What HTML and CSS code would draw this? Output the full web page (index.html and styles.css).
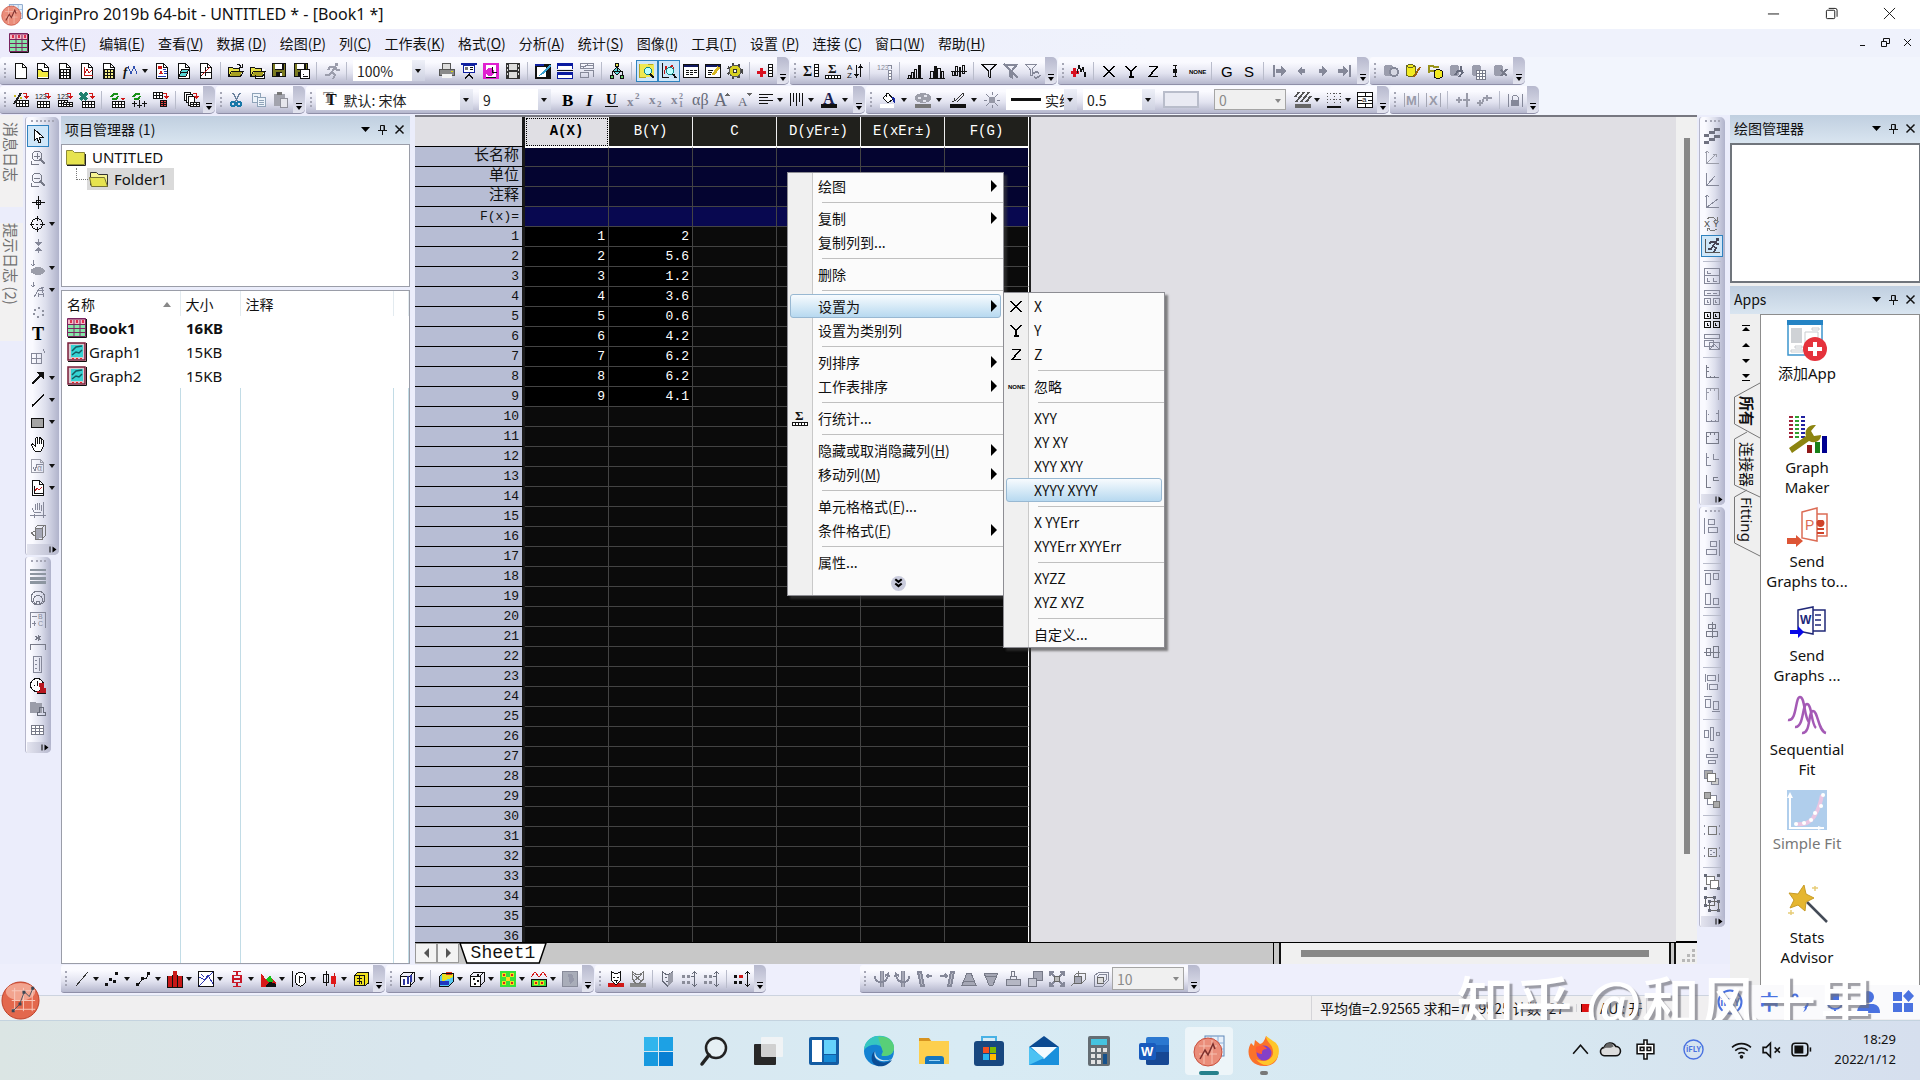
FILE: index.html
```
<!DOCTYPE html>
<html lang="zh-CN">
<head>
  <meta charset="UTF-8"/>
  <meta name="viewport" content="width=device-width, initial-scale=1.0"/>
  <title>OriginPro 2019b 64-bit - UNTITLED * - [Book1 *]</title>
  <link rel="stylesheet" href="styles.css">
</head>
<body>
  <header class="titlebar">
    <span class="app-icon" data-big="origin"></span>
    <h1>OriginPro 2019b 64-bit - UNTITLED * - [Book1 *]</h1>
    <div class="win-controls">
      <button aria-label="Minimize"><svg viewBox="0 0 14 14"><path d="M1 7.500h12"/></svg></button>
      <button aria-label="Restore"><svg viewBox="0 0 14 14"><rect x="1.500" y="3.500" width="9" height="9" rx="1"/><path d="M4 1.500h7a2 2 0 0 1 2 2v7"/></svg></button>
      <button aria-label="Close"><svg viewBox="0 0 14 14"><path d="M1 1l12 12M13 1L1 13"/></svg></button>
    </div>
  </header>

  <nav class="menubar">
    <span class="book-icon" data-big="book"></span>
    <a href="#">文件(<u>F</u>)</a>
    <a href="#">编辑(<u>E</u>)</a>
    <a href="#">查看(<u>V</u>)</a>
    <a href="#">数据 (<u>D</u>)</a>
    <a href="#">绘图(<u>P</u>)</a>
    <a href="#">列(<u>C</u>)</a>
    <a href="#">工作表(<u>K</u>)</a>
    <a href="#">格式(<u>O</u>)</a>
    <a href="#">分析(<u>A</u>)</a>
    <a href="#">统计(<u>S</u>)</a>
    <a href="#">图像(<u>I</u>)</a>
    <a href="#">工具(<u>T</u>)</a>
    <a href="#">设置 (<u>P</u>)</a>
    <a href="#">连接 (<u>C</u>)</a>
    <a href="#">窗口(<u>W</u>)</a>
    <a href="#">帮助(<u>H</u>)</a>
    <div class="mdi-controls">
      <button aria-label="Minimize book"><svg viewBox="0 0 9 9"><path d="M1 7.500h5"/></svg></button>
      <button aria-label="Restore book"><svg viewBox="0 0 9 9"><path d="M.5 3.500h5v5h-5zM2.500 3V.5h6v5H6"/></svg></button>
      <button aria-label="Close book"><svg viewBox="0 0 9 9"><path d="M1 1l7 7M8 1L1 8"/></svg></button>
    </div>
  </nav>

  <div class="toolbar-row">
    <div class="toolbar">
      <div class="tools" data-tools="new folder book graph matrix fx+ layout notes2 func | open openx save savex | run |"></div>
      <label class="combo zoom"><select aria-label="Zoom"><option>100%</option></select></label>
      <div class="tools" data-tools="print slide video film | brush rows split | tree | *explorer *plotview results script gear | addcol"></div>
    </div>
    <div class="toolbar">
      <div class="tools" data-tools="colstat rowstat sort | numcol | bars1 bars2 bars3 | filter nofilter refilter"></div>
    </div>
    <div class="toolbar">
      <div class="tools" data-tools="addplot | X Y Z err none | G S | first prev next last"></div>
    </div>
    <div class="toolbar">
      <div class="tools" data-tools="dbgear dbedit dbopen dbview dbgrid dbcut"></div>
    </div>
  </div>

  <div class="toolbar-row">
    <div class="toolbar">
      <div class="tools" data-tools="wizard imp1 imp2 excel | reimp1 reimp2 table | stack"></div>
    </div>
    <div class="toolbar">
      <div class="tools" data-tools="cut copy paste"></div>
    </div>
    <div class="toolbar">
      <label class="combo font"><b class="tt">T</b><select aria-label="Font"><option>默认: 宋体</option></select></label>
      <label class="combo size"><select aria-label="Font size"><option>9</option></select></label>
      <div class="tools" data-tools="bold italic under sup sub supsub greek bigA smallA align+ vlines+ fontcolor^"></div>
    </div>
    <div class="toolbar">
      <div class="tools" data-tools="fill^ palette^ linecolor^ sun"></div>
      <label class="combo line"><i></i><select aria-label="Line style"><option>实线</option></select></label>
      <label class="combo size"><select aria-label="Line width"><option>0.5</option></select></label>
      <button class="swatch" aria-label="Line pattern"></button>
      <label class="combo size off"><select aria-label="Pattern width" disabled><option>0</option></select></label>
      <div class="tools" data-tools="hatch+ border+ merge"></div>
    </div>
    <div class="toolbar">
      <div class="tools" data-tools="maskM maskX | plusv plush | lock"></div>
    </div>
  </div>

  <main class="main">
    <div class="center">
      <div class="work">
        <div class="side-tabs">
          <button>消息日志</button>
          <button>提示日志 (2)</button>
        </div>
        <div class="side-tools left">
          <div class="toolbar vertical wide"><div class="tools" data-tools="*pointer zoomin zoomout cross target+ squeeze blob+ figure+ dots textT anno arrow+ lineT+ rect+ hand root+ inset+ handaxis cube"></div></div>
          <div class="toolbar vertical"><div class="tools" data-tools="stripes rings legend asterisk ruler clock stamp grid3"></div></div>
        </div>

        <section class="project">
          <div class="panel-title"><h2>项目管理器 (1)</h2><div class="panel-btns"></div></div>
          <div class="tree">
            <a href="#"><svg class="fold" viewBox="0 0 20 17"><path d="M.5 15.500v-14h6l2 2h10v12z" fill="#e6e34f" stroke="#8c8a38"/><path d="M1 16.500h18.500V5" fill="none" stroke="#222"/></svg>UNTITLED</a>
            <a href="#" class="child"><svg class="fold" viewBox="0 0 20 17"><path d="M1.500 14V1.500h6l2 2h9v12z" fill="#f6f392" stroke="#333"/><path d="M2.500 15.500L.5 6.500h15l3 9z" fill="#e6e34f" stroke="#777432"/></svg>Folder1</a>
          </div>
          <div class="files">
            <table>
              <thead><tr><th>名称 <i class="up"></i></th><th>大小</th><th>注释</th><th></th></tr></thead>
              <tbody>
                <tr class="current"><td><span data-big="book"></span>Book1</td><td>16KB</td><td></td><td></td></tr>
                <tr><td><span data-big="graphfile"></span>Graph1</td><td>15KB</td><td></td><td></td></tr>
                <tr><td><span data-big="graphfile"></span>Graph2</td><td>15KB</td><td></td><td></td></tr>
                <tr class="rest"><td></td><td></td><td></td><td></td></tr>
              </tbody>
            </table>
          </div>
        </section>

        <section class="book">
          <div class="canvas">
            <div class="sheet-wrap">
              <table class="sheet">
                <thead><tr><th></th><th class="active">A(X)</th><th>B(Y)</th><th>C</th><th>D(yEr±)</th><th>E(xEr±)</th><th>F(G)</th></tr></thead>
                <tbody id="sheetBody"></tbody>
              </table>
            </div>
            <div class="vscroll"><i></i></div>
          </div>
          <div class="sheet-tabs">
            <button class="nav-btn" aria-label="Previous sheet"><i class="tri left"></i></button>
            <button class="nav-btn" aria-label="Next sheet"><i class="tri right"></i></button>
            <button class="sheet-tab"><svg viewBox="0 0 90 20" preserveAspectRatio="none"><path d="M1 0l7 20h74l7-20z" fill="#fff" stroke="#000" stroke-width="1.500"/></svg><span>Sheet1</span></button>
            <div class="tab-fill"></div>
            <div class="hscroll"><i></i></div>
            <div class="corner"><svg viewBox="0 0 14 14"><path d="M10 0h3v3h-3zM10 5h3v3h-3zM5 5h3v3H5zM10 10h3v3h-3zM5 10h3v3H5zM0 10h3v3H0z" fill="#b8b8b8"/></svg></div>
          </div>

          <div class="menu" id="columnMenu">
            <button class="sub">绘图</button>
            <hr>
            <button class="sub">复制</button>
            <button>复制列到...</button>
            <hr>
            <button>删除</button>
            <hr>
            <button class="sub hot">设置为</button>
            <button>设置为类别列</button>
            <hr>
            <button class="sub">列排序</button>
            <button class="sub">工作表排序</button>
            <hr>
            <button><span class="mi" data-icon="rowstat"></span>行统计...</button>
            <hr>
            <button class="sub">隐藏或取消隐藏列(<u>H</u>)</button>
            <button class="sub">移动列(<u>M</u>)</button>
            <hr>
            <button>单元格格式(<u>F</u>)...</button>
            <button class="sub">条件格式(<u>F</u>)</button>
            <hr>
            <button>属性...</button>
            <div class="expand"><svg viewBox="0 0 14 14"><path d="M4 3l3 2.500L10 3M4 7l3 2.500L10 7" fill="none" stroke="#000" stroke-width="2"/></svg></div>
          </div>
          <div class="menu submenu" id="setAsMenu">
            <button><span class="mi" data-icon="X"></span>X</button>
            <button><span class="mi" data-icon="Y"></span>Y</button>
            <button><span class="mi" data-icon="Z"></span>Z</button>
            <hr>
            <button><span class="mi" data-icon="none"></span>忽略</button>
            <hr>
            <button>XYY</button>
            <button>XY XY</button>
            <button>XYY XYY</button>
            <button class="hot">XYYY XYYY</button>
            <hr>
            <button>X YYErr</button>
            <button>XYYErr XYYErr</button>
            <hr>
            <button>XYZZ</button>
            <button>XYZ XYZ</button>
            <hr>
            <button>自定义...</button>
          </div>
        </section>

        <div class="side-tools right">
          <div class="toolbar vertical"><div class="tools" data-tools="steps axis1 axis2 axis3 swapxy *speed | lay1 lay2 lay3 lay4 | ax1 ax2 ax3 ax4 ax5 ax6"></div></div>
          <div class="toolbar vertical"><div class="tools" data-tools="alignl alignr | alignt alignb | midv midh | samew sameh | dist1 dist2 front back | fit1 fit2 | group ungroup"></div></div>
        </div>
      </div>

      <div class="toolbar-row bottom">
        <div class="toolbar">
          <div class="tools" data-tools="pline+ pscatter+ plinesym+ pcolumn+ ptemplate+ pbox+ parea+ ppolar+ pstock+ pzoom"></div>
        </div>
        <div class="toolbar">
          <div class="tools" data-tools="bar3d+ | surface+ scatter3d+ contour+ profile+ image"></div>
        </div>
        <div class="toolbar">
          <div class="tools" data-tools="maskr maskg | maskd grp1 grp1 | grp2"></div>
        </div>
        <div class="toolbar three-d">
          <div class="tools" data-tools="rotl rotr tiltl tiltr trap trapd lamp cubes expand cube2 cube3"></div>
          <label class="combo size off"><select aria-label="Rotation angle" disabled><option>10</option></select></label>
        </div>
      </div>
    </div>

    <aside class="right-panel">
      <section>
        <div class="panel-title"><h2>绘图管理器</h2><div class="panel-btns"></div></div>
        <div class="plot-box"></div>
      </section>
      <section class="apps">
        <div class="panel-title"><h2>Apps</h2><div class="panel-btns"></div></div>
        <div class="apps-body">
          <div class="app-tabs">
            <svg class="outline" viewBox="0 0 30 250"><path d="M30 69L4.500 83v27L30 124M17 118L4.500 125v46L30 183M17 176L4.500 183v46L30 242" fill="none" stroke="#777"/></svg>
            <div class="spin">
              <button aria-label="Top"><svg viewBox="0 0 8 8"><path d="M0 0h8v1H0zM4 2l4 4H0z"/></svg></button>
              <button aria-label="Up"><svg viewBox="0 0 8 8"><path d="M4 2l4 4H0z"/></svg></button>
              <button aria-label="Down"><svg viewBox="0 0 8 8"><path d="M4 6l4-4H0z"/></svg></button>
              <button aria-label="Bottom"><svg viewBox="0 0 8 8"><path d="M0 7h8v1H0zM4 5l4-4H0z"/></svg></button>
            </div>
            <button class="vt on">所有</button>
            <button class="vt">连接器</button>
            <button class="vt">Fitting</button>
          </div>
          <div class="app-list">
            <a href="#"><span data-big="addapp"></span>添加App</a>
            <a href="#"><span data-big="maker"></span>Graph Maker</a>
            <a href="#"><span data-big="ppt"></span>Send Graphs to...</a>
            <a href="#"><span data-big="wordsend"></span>Send Graphs&nbsp;...</a>
            <a href="#"><span data-big="seqfit"></span>Sequential Fit</a>
            <a href="#" class="dim"><span data-big="simplefit"></span>Simple Fit</a>
            <a href="#"><span data-big="wand"></span>Stats Advisor</a>
          </div>
        </div>
      </section>
    </aside>
  </main>

  <footer class="status">
    <span class="stats">平均值=2.92565 求和=70.9925 计数=27</span>
    <span class="flag"><i></i></span>
    <span class="auto">AU : 开</span>
  </footer>

  <div class="float-logo" data-big="origin-round"></div>
  <div class="ime">
    <svg viewBox="0 0 26 26"><circle cx="13" cy="13" r="11.500"/><text x="13" y="17" text-anchor="middle" font-size="10" font-weight="700">iFLY</text></svg>
    <b>中</b>
    <svg viewBox="0 0 26 26"><circle cx="8" cy="8" r="2.500"/><path class="solid" d="M17 12a3.500 3.500 0 1 1-1 6 1 1 0 0 0 1-6zm3 3c1 4-1 7-4 8 2-2 2-4 2-6z"/></svg>
    <svg viewBox="0 0 26 26"><rect class="solid" x="9" y="2" width="8" height="14" rx="4"/><path d="M5 12a8 8 0 0 0 16 0M13 20v4"/></svg>
    <svg viewBox="0 0 26 26"><circle class="solid" cx="12" cy="8" r="6"/><path class="solid" d="M1 24c0-8 5-9 9-9h6c4 0 8 2 8 9z"/></svg>
    <svg viewBox="0 0 26 26"><path class="solid" d="M3 3h9v9H3zM3 14h9v9H3zM14 14h9v9h-9zM18.500 1l5.500 6-5.500 6L13 7z"/></svg>
  </div>
  <div class="watermark">知乎 @和风十里</div>

  <footer class="taskbar">
    <div class="dock">
      <button aria-label="Start" data-big="windows"></button>
      <button aria-label="Search" data-big="search"></button>
      <button aria-label="Task view" data-big="taskview"></button>
      <button aria-label="Widgets" data-big="widgets"></button>
      <button aria-label="Edge" data-big="edge"></button>
      <button aria-label="Explorer" data-big="files"></button>
      <button aria-label="Store" data-big="store"></button>
      <button aria-label="Mail" data-big="mail"></button>
      <button aria-label="Calculator" data-big="calc"></button>
      <button aria-label="Word" data-big="word"></button>
      <button aria-label="Origin" data-big="origin" class="running"></button>
      <button aria-label="Firefox" data-big="firefox" class="open"></button>
    </div>
    <div class="tray">
      <svg viewBox="0 0 20 20"><path d="M3 14l7-8 7 8"/></svg>
      <svg viewBox="0 0 20 20"><path d="M5 16a4 4 0 0 1-1-8 6 6 0 0 1 11-1 4.500 4.500 0 0 1 0 9z" fill="#ddd"/><path d="M3 9c4-2 6 1 10-2l-2-3-4 0z" fill="#666" stroke="none"/></svg>
      <svg class="lang" viewBox="0 0 20 20"><path d="M8.500 1h3v4H18v9h-6.500v5h-3v-5H2V5h6.500z" fill="#fff"/><path d="M5 8h3.500v3H5zM11.500 8H15v3h-3.500z"/></svg>
      <svg class="ifly" viewBox="0 0 22 22"><circle cx="11" cy="11" r="10"/><text x="11" y="14" text-anchor="middle" font-size="8" font-weight="700">iFLY</text></svg>
      <svg class="wifi" viewBox="0 0 20 20"><path d="M1 8a13 13 0 0 1 18 0M4 11a9 9 0 0 1 12 0M7 14a5 5 0 0 1 6 0"/><circle cx="10" cy="17" r="1"/></svg>
      <svg viewBox="0 0 20 20"><path d="M2 8h3l4-4v13l-4-4H2zM13 8l5 5M18 8l-5 5"/></svg>
      <svg viewBox="0 0 20 20"><rect x="1" y="4" width="15" height="12" rx="3"/><path d="M4 7h7v6H4z" fill="#111"/><path d="M18.500 8v4"/></svg>
      <div class="clock">18:29<br>2022/1/12</div>
    </div>
  </footer>

  <script src="script.js"></script>
</body>
</html>
```
FILE: styles.css
```
:root {
  --bg: #ebedfb;
  --edge: #8f8fa8;
  --ui: "Noto Sans", "Noto Sans CJK SC", sans-serif;
  --menu: "Noto Sans CJK SC", sans-serif;
  --mono: "Liberation Mono", "Noto Sans CJK SC", monospace;
}
* { margin:0; padding:0; box-sizing:border-box; }
body {
  height:100vh; overflow:hidden; position:relative;
  display:flex; flex-direction:column;
  font:14px/20px var(--menu); color:#111; background:var(--bg);
}
button { font:inherit; color:inherit; background:none; border:none; }
a { color:inherit; text-decoration:none; }
svg { display:block; overflow:visible; }
[data-big] svg { width:100%; height:100%; }

/* title and menus */
.titlebar { height:29px; background:#fff; display:flex; align-items:center; flex:none; }
.app-icon { width:22px; height:24px; margin:0 3px 0 1px; }
.titlebar h1 { font:400 16px/20px var(--ui); padding-bottom:2px; }
.win-controls { margin-left:auto; display:flex; padding:0 2px 2px 0; }
.win-controls button { width:58px; height:27px; display:grid; place-items:center; }
.win-controls svg { width:13px; height:13px; fill:none; stroke:#111; }
.menubar { height:28px; display:flex; align-items:center; flex:none; padding-bottom:1px; background:linear-gradient(90deg, #ecebfb, #eff2fc 60%); }
.book-icon { width:20px; height:20px; margin:0 6px 0 9px; }
.menubar a { padding:0 7px 0 6px; }
.mdi-controls { margin-left:auto; display:flex; padding-right:2px; }
.mdi-controls button { width:22px; height:20px; display:grid; place-items:center; }
.mdi-controls svg { width:9px; height:9px; fill:none; stroke:#111; }

/* toolbars */
.toolbar-row { height:29px; display:flex; gap:1px; flex:none; background:linear-gradient(90deg, #eae9fa, #f2f5fd 60%); }
.toolbar {
  height:28px; display:flex; align-items:center; padding-left:10px; position:relative;
  background:linear-gradient(#fafaff 20%, #e2e3f0 60%, #b5b7cd);
  border-bottom:1px solid var(--edge); border-radius:3px 5px 5px 3px;
}
.toolbar::before { content:""; position:absolute; left:4px; top:6px; bottom:6px; border-left:2px dotted #a5a6b5; }
.tools { display:flex; align-items:center; }
.tool { width:22px; height:22px; display:flex; align-items:center; justify-content:center; flex:none; }
.tool svg { width:16px; height:16px; shape-rendering:crispEdges; flex:none; }
.tool.dd { width:31px; gap:3px; }
.tool.dd::after { content:""; border:3px solid transparent; border-top:4px solid #111; border-bottom:0; }
.tool.dd.wide { width:35px; gap:5px; }
.tool.on { background:#cfe6f8; box-shadow:inset 0 0 0 1px #2f82bf; }
.sep { width:1px; height:18px; margin:0 4px 0 3px; background:#b9bccb; }
.more { align-self:stretch; width:12px; margin-left:1px; border-radius:0 5px 5px 0; background:linear-gradient(#b7b9ce, #e3e4ef); display:flex; align-items:flex-end; justify-content:center; padding-bottom:3px; }
.more svg { width:6px; height:7px; }
.combo { height:21px; background:#fff; display:flex; align-items:center; position:relative; margin:0 6px 0 0; }
.combo select { appearance:none; border:none; background:none; font:14px/20px var(--menu); color:#222; width:100%; height:21px; padding-left:4px; outline:none; opacity:1; }
.combo::after { content:""; position:absolute; right:0; top:0; width:13px; height:21px; background:linear-gradient(#eef0f8, #ced1e1); }
.combo::before { content:""; position:absolute; z-index:1; right:4px; top:9px; border:3px solid transparent; border-top:4px solid #111; border-bottom:0; }
.combo.zoom { width:72px; margin-left:2px; margin-right:11px; }
.combo.font { width:157px; }
.combo.size { width:72px; }
.combo.line { width:71px; margin-left:3px; }
.combo.line i { width:30px; height:3px; background:#111; margin-left:5px; flex:none; }
.combo.off { background:#f0f0f0; border:1px solid #a5a5a5; }
.combo.off select { color:#8a8a8a; }
.combo.off::before { border-top-color:#888; }
.combo.off::after { display:none; }
.tt { font:700 16px/20px "Liberation Serif", serif; padding-left:10px; text-shadow:-3px -2px 0 #888; width:26px; }
.swatch { width:36px; height:17px; border:2px solid #b9bdcb; margin:0 15px 0 2px; background:#e9eaf3; }

/* vertical toolbars */
.side-tools { display:flex; flex-direction:column; align-items:flex-start; gap:2px; padding-top:2px; flex:none; }
.side-tools.left { width:36px; }
.side-tools.right { width:33px; padding-left:2px; }
.toolbar.vertical { width:26px; height:auto; flex-direction:column; align-items:flex-start; padding:8px 0 0 1px; background:linear-gradient(90deg, #fafaff 20%, #dcdeec 60%, #b0b3cb); border-bottom:0; border-left:1px solid #b5b6ca; }
.toolbar.vertical.wide { width:34px; }
.toolbar.vertical::before { left:5px; right:5px; top:3px; bottom:auto; border-left:0; border-top:2px dotted #a5a6b5; }
.vertical .tools { flex-direction:column; align-items:flex-start; }
.vertical .sep { width:18px; height:1px; margin:4px 2px 3px; }
.vertical .more { align-self:auto; width:100%; height:11px; margin:1px 0 0; justify-content:flex-end; align-items:center; padding:0 3px 0 0; background:linear-gradient(90deg, #e3e4ef, #b7b9ce); }
.vertical .more svg { transform:rotate(-90deg); }

/* main area */
.main { flex:1; min-height:0; display:flex; }
.center { flex:1; min-width:0; display:flex; flex-direction:column; }
.work { flex:1; min-height:0; display:flex; }
.side-tabs { width:25px; display:flex; flex-direction:column; gap:16px; flex:none; }
.side-tabs button { writing-mode:vertical-rl; text-orientation:sideways; width:23px; height:92px; padding-top:7px; text-align:left; background:#f2f1f1; color:#707070; font-size:15px; line-height:23px; }
.side-tabs button + button { height:118px; padding-top:0; }
.panel-title { height:28px; display:flex; align-items:center; padding:0 5px 2px 4px; background:linear-gradient(#c0cfe0, #d9e5f0); flex:none; }
.panel-title h2 { font:400 14px/20px var(--menu); }
.panel-btns { margin-left:auto; display:flex; gap:6px; }
.panel-btns svg { width:11px; height:11px; }
.project { width:349px; margin-right:5px; padding-top:1px; display:flex; flex-direction:column; flex:none; }
.tree, .files { background:#fff; border:1px solid #9a9da8; }
.tree { height:143px; margin-bottom:3px; padding:1px 3px; font:15px/22px var(--ui); }
.tree a { display:flex; align-items:center; gap:6px; width:120px; height:22px; padding-left:1px; }
.tree .child { margin-left:22px; width:87px; padding-left:2px; gap:5px; background:#dadada; position:relative; }
.tree .child::before { content:""; position:absolute; left:-11px; top:0; width:11px; height:11px; border-left:1px dotted #777; border-bottom:1px dotted #777; }
.fold { width:20px; height:17px; flex:none; }
.files { flex:1; min-height:0; }
.files table { width:100%; height:100%; border-collapse:collapse; table-layout:fixed; font:15px/24px var(--ui); }
.files th { height:25px; font:400 14px/20px var(--menu); text-align:left; padding-left:5px; border-right:1px solid #e3ebf0; position:relative; }
.files th:nth-child(1) { width:118px; }
.files th:nth-child(2) { width:60px; }
.files th:nth-child(3) { width:153px; }
.files .up { position:absolute; right:9px; top:11px; border:4px solid transparent; border-bottom:5px solid #888; border-top:0; }
.files tr { height:24px; }
.files td { padding-left:6px; }
.files td:first-child { padding-left:5px; }
.files td span { display:inline-block; width:20px; height:20px; margin-right:2px; vertical-align:-4px; }
.files .current { font-weight:700; }
.files .rest { height:auto; }
.files .rest td { border-right:1px solid #c2dce6; }

/* worksheet */
.book { flex:1; min-width:0; display:flex; flex-direction:column; position:relative; border-top:2px solid #777780; background:#e0dfe4; }
.canvas { flex:1; min-height:0; display:flex; overflow:hidden; }
.sheet-wrap { flex:1; overflow:hidden; }
.sheet { width:614px; border-collapse:separate; border-spacing:0; table-layout:fixed; font:13px/19px var(--mono); border-right:2px solid #222; }
.sheet tr { height:20px; }
.sheet th, .sheet td { width:84px; height:20px; border-right:1px solid #444; border-bottom:1px solid #444; background:#0b0b0b; color:#fff; font-weight:400; text-align:right; padding-right:3px; overflow:hidden; }
.sheet th:first-child { width:110px; background:#b7bdd4; color:#111; border-bottom-color:#000; border-right:3px solid #1a1a1a; padding-right:3px; }
.sheet tr > :last-child { border-right-color:#fff; }
.sheet td.data { background:#000; }
.sheet thead th { height:30px; font-size:14px; text-align:center; background:#20201c; border-color:#eee; border-bottom:1px solid #fff; padding:0; }
.sheet thead th:first-child { background:#e0dfe4; }
.sheet thead th.active { background:#e0dfe4; color:#000; font-weight:700; outline:1px dotted #000; outline-offset:-2px; }
.sheet .label td { background:#040430; }
.sheet .label th { font-size:15px; line-height:18px; }
.sheet .label.fx th { font-size:13px; }
.sheet .label.fx td { background:#080850; }
.sheet .label:first-child td { border-top:1px solid #fff; }
.vscroll { width:21px; background:#f0f0f0; flex:none; padding:21px 6px 87px 8px; border-bottom:1px solid #000; }
.vscroll i { display:block; width:6px; height:100%; background:#888; }
.sheet-tabs { height:22px; display:flex; background:#c8c8c8; border-top:1px solid #000; flex:none; }
.nav-btn { width:22px; height:20px; background:#f3f3f3; border:1px solid #999; display:grid; place-items:center; }
.tri { border:5px solid transparent; }
.tri.left { border-right-color:#555; border-left:0; }
.tri.right { border-left-color:#555; border-right:0; }
.sheet-tab { width:88px; height:20px; position:relative; font:18px/20px var(--mono); }
.sheet-tab svg { position:absolute; inset:0; width:100%; height:100%; }
.sheet-tab span { position:relative; }
.tab-fill { flex:1; border-right:1px solid #000; }
.hscroll { width:392px; margin-left:5px; padding:7px 20px; border-left:2px solid #111; border-right:2px solid #111; background:#f0f0f0; }
.hscroll i { display:block; height:7px; background:#888; }
.corner { width:23px; background:#f0f0f0; border-left:2px solid #111; margin-left:3px; padding:6px 0 0 6px; }
.corner svg { width:14px; height:14px; }

/* popup menus */
.menu { position:absolute; left:372px; top:55px; width:217px; padding:1px 2px; border:1px solid #8d8d93; background:linear-gradient(90deg, #f0f0f0 24px, #c9c9c9 24px 25px, #fbfbfb 25px); box-shadow:3px 3px 2px rgba(60,60,60,0.6); z-index:2; }
.menu button { display:block; position:relative; width:100%; height:24px; line-height:20px; padding-left:27px; text-align:left; border:1px solid transparent; border-radius:3px; white-space:nowrap; }
.menu hr { height:1px; border:0; background:#c0c0c0; margin:4px -2px 3px 32px; }
.menu .hot { border-color:#98b8d2; background:linear-gradient(#f7fbfe, #b7d9f0); }
.menu .sub::after { content:""; position:absolute; right:3px; top:5px; border:6px solid transparent; border-left-color:#000; border-right:0; }
.mi { position:absolute; left:1px; top:3px; }
.mi svg { width:16px; height:16px; shape-rendering:crispEdges; }
.submenu { left:588px; top:175px; width:162px; }
.expand { height:20px; padding:2px 0 0 5px; }
.expand svg { width:15px; height:15px; margin:0 auto; border-radius:50%; background:#c9cbdc; }

.toolbar-row.bottom { height:31px; padding:1px 0 0 61px; background:#eeeffc; }
.bottom .three-d { margin-left:93px; }
.bottom .three-d .combo { margin-right:3px; height:23px; }

/* right panel */
.right-panel { width:190px; display:flex; flex-direction:column; flex:none; background:#efefef; }
.right-panel .panel-title { padding-right:4px; }
.plot-box { height:140px; background:#fff; border:2px solid #70757c; border-right-width:1px; margin-bottom:3px; }
.apps { flex:1; min-height:0; display:flex; flex-direction:column; }
.apps-body { flex:1; min-height:0; display:flex; overflow:hidden; }
.app-tabs { width:30px; position:relative; flex:none; }
.outline { position:absolute; left:0; top:0; width:30px; height:250px; }
.spin { height:70px; padding:7px 0 0 12px; }
.spin button { display:block; width:8px; height:16px; }
.spin svg { width:8px; height:8px; }
.vt { position:relative; display:block; writing-mode:vertical-rl; text-orientation:sideways; width:24px; height:54px; margin-left:5px; font:15px/24px var(--ui); }
.vt.on { font-weight:700; }
.app-list { flex:1; background:#fff; border:1px solid #8d8d8d; border-bottom:0; padding-top:5px; }
.app-list a { display:block; width:92px; height:94px; padding:0 3px; text-align:center; font:15px/20px var(--ui); }
.app-list span { display:block; width:40px; height:40px; margin:0 auto 3px; }
.app-list .dim { color:#777; }
.app-list .dim span { opacity:0.8; }

/* status and overlays */
.status { height:25px; display:flex; align-items:center; background:#f0eff0; border-top:1px solid #ccd3df; flex:none; padding-left:1311px; line-height:24px; white-space:nowrap; }
.status span { border-left:1px solid #d4d4d8; padding:0 3px 0 8px; }
.status .stats { width:265px; }
.status .flag { padding:0 4px; }
.flag i { display:block; width:9px; height:8px; background:#d11; border-left:1px solid #400; }
.status .auto { padding-left:5px; border-right:1px solid #d4d4d8; }
.float-logo { position:absolute; left:1px; bottom:60px; width:39px; height:39px; }
.ime { position:absolute; right:0; bottom:61px; width:207px; height:34px; padding:0 4px; display:flex; align-items:center; justify-content:space-between; background:#fafafc; color:#4a72e0; }
.ime svg { width:26px; height:26px; fill:none; stroke:#4a72e0; stroke-width:2; }
.ime b { font-size:20px; padding-left:8px; }
.ime text, .ime .solid { fill:#4a72e0; stroke:none; }
.watermark { position:absolute; right:46px; bottom:42px; font:500 58px/76px var(--menu); color:#fff; text-shadow:3px 3px 1px rgba(110,110,120,0.65); white-space:nowrap; }

/* taskbar */
.taskbar { height:60px; flex:none; position:relative; display:flex; justify-content:center; align-items:center; padding-left:2px; background:linear-gradient(90deg, #dbe5e4, #d8e6ee 22%, #d8ebf4 50%, #d7e8f1 80%, #d6dfee); border-top:1px solid #c4d3df; }
.dock { display:flex; gap:7px; }
.dock button { width:48px; height:48px; padding:8px; position:relative; border-radius:4px; }
.dock .running { background:#edf5f9; }
.dock .running::after, .dock .open::after { content:""; position:absolute; left:14px; right:14px; bottom:0; height:4px; border-radius:2px; background:#26808c; }
.dock .open::after { left:20px; right:20px; background:#777; }
.tray { position:absolute; right:24px; top:8px; display:flex; align-items:center; gap:9px; height:40px; }
.tray svg { width:21px; height:21px; fill:none; stroke:#111; stroke-width:1.500; }
.tray .lang { margin-left:5px; }
.tray .ifly { margin:0 18px; stroke:#4a72e0; }
.tray .ifly text { fill:#4a72e0; stroke:none; }
.clock { width:75px; text-align:right; font:13px/20px var(--ui); }
```
FILE: script.js
```
const s = (d, c = "#111", w = 1) => `<path d="${d}" fill="none" stroke="${c}" stroke-width="${w}"/>`;
const f = (d, c = "#111") => `<path d="${d}" fill="${c}"/>`;
const t = (x, y, txt, size, c = "#111", extra = "") => `<text x="${x}" y="${y}" font-size="${size}" fill="${c}" ${extra}>${txt}</text>`;
const box = (x, y, w, h, fill = "none", c = "#111") => `<rect x="${x + 0.5}" y="${y + 0.5}" width="${w}" height="${h}" fill="${fill}" stroke="${c}"/>`;
// ruled grid: cols x rows of cw x ch cells
function grid(x, y, cols, rows, cw, ch, c = "#111", fill = "#fff") {
  let d = "";
  for (let i = 0; i <= cols; i++) d += `M${x + i * cw + 0.5} ${y}v${rows * ch + 1}`;
  for (let j = 0; j <= rows; j++) d += `M${x} ${y + j * ch + 0.5}h${cols * cw + 1}`;
  return f(`M${x} ${y}h${cols * cw}v${rows * ch}h-${cols * cw}z`, fill) + s(d, c);
}
const G = "#858899";
const serif = 'font-family="Liberation Serif" font-weight="700"';
const sans = 'font-family="Liberation Sans"';
const page = f("M3 1h7l4 4v11H3z", "#fff") + s("M2.500 .5h7l4 4v11h-11zM9.500 .5v4h4");
const arrowR = s("M10 1.500h3.500v4", "#d01818") + f("M11 4h5l-2.500 3z", "#d01818");
const db = c => f("M1 3q4-3 9 0v9q-5 3-9 0z", c);
const fold = f("M0 5h5l1 1h6v8H0z", "#e8e24a") + s("M.5 13.500v-9h4l1 1h6v3M.5 13.500l3-5h12l-3 5z") + f("M4 9h10l-2 4H2z", "#a8a020");
const disk = f("M0 0h14v14H0z") + f("M3 1h7v5H3z", "#fff") + f("M1 1h2v6h9V1h1v12H1z", "#7a7a20") + f("M4 9h6v5H4z") + f("M8 10h2v3H8z", "#fff");

const icons = {
  new: page,
  folder: page + f("M3 7h4l1 1h5v6H3z", "#f2ea40") + s("M2.500 6.500h4l1 2h6v6"),
  book: page + grid(3, 6, 3, 3, 3, 3),
  graph: page + s("M5.500 4v8h8", "#c01818") + s("M6 10l2-4 2 4 3-3", "#c01818"),
  matrix: page + grid(3, 6, 3, 3, 3, 3, "#111", "#f5f08a"),
  fx: s("M5 3l3 8 3-8 3 8", "#3050b0") + t(0, 13, "f", 13, "#111", serif + ' font-style="italic"'),
  layout: page + f("M4 3h4v3H4z", "#d01818") + f("M5 11l2-4 2 4z", "#d01818") + s("M10 8h3M10 10h3M4 13.500h8M9 6.500h3", "#2038b0"),
  notes2: page + f("M6 6h7l-3 7H3z", "#58d8d8") + s("M6 6h7l-3 7H3zM5 9.500h6"),
  func: page + s("M3 13l9-9M7 4v9M3 9.500h10") + s("M4 12l8-8", "#c01818"),
  open: s("M9 2q3-1 4 2M14 1v3h-3") + fold,
  openx: f("M5 6h10v10H5z", "#fff") + fold + s("M5.500 12v3.500h9V8"),
  save: disk,
  savex: disk + f("M6 6h10v10H6z", "#fff") + box(6, 6, 9, 9) + s("M9 13.500h5M9 11.500h1"),
  run: s("M11 4L8 9l3 3-2 4M8 9l-3 3H1M4 7l2-3h5l2 3h3", "#9b9dac", 2) + f("M11 0h3v3h-3z", "#9b9dac"),
  print: f("M0 7h16v6H0z", "#8b8b8b") + f("M4 1h8v6H4z", "#ddd") + s("M3.500 6.500v-6h8v6M.5 6.500h15v6H.5z", "#555") + f("M3 11h10v4H3z", "#f4f4f4") + f("M12 8h2v1h-2z", "#dd0"),
  slide: f("M0 0h16v2H0z", "#1020a0") + box(2, 2, 11, 7, "#fff", "#1020a0") + s("M5 5.500h2M9 4.500h3M9 6.500h3M8 10v3M4 15.500l4-4 4 4") + f("M4 4h3v3H4z", "#777"),
  video: f("M0 0h16v16H0z", "#e020d0") + f("M3 2h10v12H3z", "#fff") + `<circle cx="7" cy="9" r="4" fill="#e020d0"/>` + s("M9.500 4v5h4M3 14.500h10"),
  film: f("M1 0h14v16H1z", "#333") + f("M4 1h8v6H4zM4 9h8v6H4zM2 2h1v2H2zM2 6h1v2H2zM2 10h1v2H2zM13 2h1v2h-1zM13 6h1v2h-1zM13 10h1v2h-1z", "#ddd"),
  brush: f("M0 1h16v15H0z", "#111") + f("M2 4h9v10H2z", "#fff") + f("M15 1l-7 7-4 5 6-3 6-7z", "#38a0d0") + f("M0 1h9v2H0z", "#1020a0"),
  rows: f("M0 0h16v6H0zM0 9h16v7H0z", "#0a1aa0") + f("M1 3h14v3H1zM1 12h14v3H1z", "#fff") + s("M0 7.500h16"),
  split: s("M1.500 .5h13v5h-13zM1.500 3l3 1 4-2 5 1M1.500 9.500h8v5h-8zM4.500 7.500h10v6", G),
  tree: f("M8 4l4 4-4 4-4-4z", "#62d8e0") + s("M8 3v5M3 13V8h10v5M8 4l4 4-4 4-4-4z") + box(6, 0, 3, 3, "#e8e850") + box(1, 12, 3, 3, "#6c6") + box(11, 12, 3, 3, "#6c6"),
  explorer: f("M0 1h15v13H0z", "#f0e850") + s("M.5 1v13h6M9 1.500h5", "#b8a820") + `<circle cx="9" cy="8" r="3.500" fill="#bff" stroke="#188"/>` + s("M11 11l4 4", "#111", 2),
  plotview: s("M1.500 0v14.500h6") + s("M3 11l2-8 2 5 4-6 2 4", "#c01818") + `<circle cx="9" cy="8" r="3.500" fill="#bff" stroke="#188"/>` + s("M12 11l3 4", "#111", 2),
  results: box(0, 1, 15, 13, "#fff") + f("M1 2h14v2H1z", "#101860") + s("M3 7.500h3M7 7.500h3M11 7.500h3M3 9.500h3M7 9.500h3M11 9.500h3M3 11.500h3M7 11.500h3"),
  script: box(0, 1, 15, 13, "#fff") + f("M1 2h14v2H1z", "#101860") + s("M3 7.500h5M3 9.500h4M3 11.500h3") + s("M8 12l6-8", "#d8b820", 3),
  gear: `<circle cx="8" cy="8" r="6" fill="#d8d020" stroke="#444" stroke-width="4" stroke-dasharray="2 3"/><circle cx="8" cy="8" r="6" fill="#d8d020" stroke="#555"/><circle cx="8" cy="8" r="2" fill="#fff" stroke="#333"/>`,
  addcol: f("M3 5h3v3h3v3H6v3H3v-3H0V8h3z", "#d81020") + grid(11, 1, 1, 4, 4, 3),
  colstat: t(0, 13, "Σ", 14, "#111", serif) + grid(11, 1, 1, 4, 4, 3),
  rowstat: t(3, 10, "Σ", 13, "#111", serif) + grid(0, 12, 5, 1, 3, 3),
  sort: t(0, 7, "A", 8, "#111", sans) + t(0, 15, "Z", 8, "#111", sans) + s("M9.500 2v12M13.500 2v12") + f("M7 11h5l-2.500 4zM11 5h5l-2.500-4z"),
  numcol: t(0, 7, "123", 7, G, sans) + s("M11 2.500h3v3", G) + grid(11, 7, 1, 3, 3, 3, G),
  bars1: s("M0 15.500h16") + box(1, 12, 2, 3) + box(4, 9, 2, 6) + box(7, 6, 2, 9) + f("M11 2h3v14h-3z"),
  bars2: s("M0 15.500h16") + box(1, 8, 3, 7) + f("M5 3h3v13H5z") + box(8, 5, 3, 10) + box(12, 8, 2, 7),
  bars3: s("M0 8.500h16") + box(1, 8, 2, 4) + box(4, 3, 2, 9) + f("M8 4h2v10H8z") + box(11, 2, 2, 8),
  filter: s("M1 1.500h14l-6 6v7l-2-1V7.500z"),
  nofilter: s("M2 1.500h12l-5 6v7l-2-1V7.500zM1 1l14 14", G, 2),
  refilter: s("M1 1.500h10l-4 5v6H5V6.500z", G) + s("M8 11a4 4 0 0 1 6-1M15 12a4 4 0 0 1-6 2", G, 2),
  addplot: f("M2 5h3v3h3v3H5v3H2v-3H0V8h2z", "#d81020") + s("M6 10l2-8 2 7 2-5 2 10 1-5"),
  X: s("M3 3l10 11M13 3L3 14", "#000", 1.5),
  Y: s("M3 3l5 5.500L13 3M8 8.500V14M5.500 14h5", "#000", 1.5),
  Z: s("M4 3.500h8.500L4 13.500h9", "#000", 1.5),
  err: s("M8 2v12M6 2.500h4M6 13.500h4") + f("M6 6h4v4H6z"),
  none: t(0, 11, "NONE", 6, "#000", sans + ' font-weight="700"'),
  G: t(2, 14, "G", 15, "#000", sans),
  S: t(3, 14, "S", 15, "#000", sans),
  first: f("M2 2h2v12H2zM15 8l-5-5v3h-5v4h5v3z", G),
  prev: f("M4 8l5-5v3h3v4H9v3z", G),
  next: f("M12 8L7 3v3H4v4h3v3z", G),
  last: f("M12 2h2v12h-2zM11 8L6 3v3H1v4h5v3z", G),
  dbgear: db("#9b9dad") + `<circle cx="11" cy="9" r="4" fill="#d5d6e2" stroke="#858899" stroke-width="2"/>`,
  dbedit: db("#f2ea20") + s("M1 3q4-3 9 0v9q-5 3-9 0zM1 3q4 3 9 0", "#666620") + s("M9 14l6-10", "#a06010", 2),
  dbopen: s("M1.500 10V2.500h4l1 1h5M1 8h12", "#99931a", 2) + f("M7 8q4-3 8 0v6q-4 3-8 0z", "#f2ea20") + s("M7 8q4-3 8 0v6q-4 3-8 0z"),
  dbview: db("#9b9dad") + s("M6 12l3-4M10 14l4-5M12 3v6M8 8h6", "#666a7c", 2),
  dbgrid: db("#9b9dad") + grid(5, 7, 3, 3, 3, 3, "#777a8a"),
  dbcut: db("#9b9dad") + s("M8 7l6 6M14 6l-6 7", "#777a8a", 2),
  wizard: grid(3, 8, 4, 2, 3, 3) + s("M1 12L8 1", "#222", 2) + f("M1 3h2v2H1zM7 5h2v2H7z", "#c8b820") + arrowR,
  imp1: t(0, 7, "123", 7, "#111", sans) + grid(2, 9, 4, 2, 3, 3) + arrowR,
  imp2: t(0, 7, "123", 7, "#111", sans) + grid(1, 8, 3, 2, 3, 3) + grid(6, 10, 3, 2, 3, 2) + arrowR,
  excel: s("M1 1l7 7M8 1L1 8", "#1f7f6f", 3) + grid(3, 9, 4, 2, 3, 3) + arrowR,
  reimp1: s("M2 5q2-4 7-3M9 4q-1 4-6 3", "#189018", 2) + grid(3, 9, 4, 2, 3, 3) + f("M11 6h5l-2 3z", "#d01818"),
  reimp2: s("M2 5q2-4 7-3M9 4q-1 4-6 3", "#189018", 2) + s("M3.500 9v6M8.500 8v8M13.500 9v6M1 11.500h5M6 13.500h5M11 11.500h5"),
  table: grid(0, 0, 3, 2, 3, 3) + grid(7, 8, 2, 3, 3, 2, "#111", "#e44") + arrowR,
  stack: box(1, 0, 6, 8, "#fff") + box(3, 2, 6, 8, "#fff") + box(5, 4, 6, 9, "#fff") + grid(7, 10, 3, 2, 3, 2) + arrowR,
  cut: s("M4 1l5 9M11 1L6 10", "#68809c", 1.5) + `<circle cx="4" cy="12" r="2" fill="none" stroke="#1878a8" stroke-width="2"/><circle cx="10" cy="12" r="2" fill="none" stroke="#1878a8" stroke-width="2"/>`,
  copy: box(1, 1, 8, 9, "#eef4fa", "#8fa3b8") + box(6, 5, 8, 9, "#eef4fa", "#8fa3b8") + s("M8 8.500h5M8 10.500h5M8 12.500h5M3 4.500h4", "#8fa3b8"),
  paste: f("M1 2h11v12H1z", "#a3a4ae") + f("M4 0h5v3H4z", "#777") + box(7, 6, 7, 9, "#e6e6ec", "#8f909a"),
  bold: t(2, 14, "B", 17, "#000", serif),
  italic: t(4, 14, "I", 17, "#000", serif + ' font-style="italic"'),
  under: t(2, 12, "U", 15, "#000", serif) + s("M1 14.500h13"),
  sup: t(1, 14, "x", 13, G, serif) + t(9, 7, "2", 9, G, serif),
  sub: t(1, 12, "x", 13, G, serif) + t(9, 15, "2", 9, G, serif),
  supsub: t(1, 12, "x", 13, G, serif) + t(9, 7, "2", 8, G, serif) + t(9, 15, "1", 8, G, serif),
  greek: t(0, 13, "αβ", 16, "#666a78", 'font-family="Liberation Serif"'),
  bigA: t(0, 14, "A", 18, "#666a78", 'font-family="Liberation Serif"') + f("M11 4h5l-2.500-3z", "#666"),
  smallA: t(2, 14, "A", 13, "#666a78", 'font-family="Liberation Serif"') + f("M11 1h5l-2.500 3z", "#666"),
  align: s("M1 2.500h14M1 5.500h9M1 8.500h14M1 11.500h9"),
  vlines: s("M1.500 1v13M4.500 1v9M7.500 1v13M10.500 1v9M13.500 1v13"),
  fontcolor: t(2, 12, "A", 16, "#1a2050", serif) + f("M0 12h16v4H0z"),
  fill: f("M3 6l5-5 5 6-5 4z", "#fff") + s("M3 6l5-5 5 6-5 4zM6 5V1") + f("M12 5q4 0 3 7l-2-3z", "#1828a0") + f("M0 12h14v4H0z", "#fff"),
  palette: `<ellipse cx="8" cy="6" rx="8" ry="5" fill="#9c9ea9"/>` + f("M3 5h3v2H3zM9 3h3v2H9zM8 8h3v2H8z", "#e4e5ee") + f("M0 12h16v4H0z", "#777"),
  linecolor: s("M2 10q4-1 2-4M5 9l8-8 1 2-7 7", "#333") + f("M0 12h16v4H0z"),
  sun: `<circle cx="8" cy="8" r="3.500" fill="#9698a6"/>` + s("M8 0v3M8 13v3M0 8h3M13 8h3M2 2l3 3M11 11l3 3M14 2l-3 3M5 11l-3 3", G),
  hatch: s("M0 5l4-5M1 10l8-10M6 10l8-10M11 10l5-6", "#555", 2) + f("M0 12h16v4H0z", "#666"),
  border: `<path d="M1.500 1v12M8.500 1v12M14.500 1v12M1 1.500h14M1 7.500h14" stroke="#555" stroke-dasharray="1 2" fill="none"/>` + s("M1 14.500h14", "#111", 2),
  merge: box(0, 0, 15, 15, "#fff") + s("M0 4.500h16M0 11.500h16M8.500 0v4M8.500 12v4M1 8h4M11 8h4") + t(5, 10, "a", 8, "#111", sans),
  maskM: s("M1.500 1v14M15.500 1v14", "#a4a6b4") + t(3, 13, "M", 13, "#999ba9", sans + ' font-weight="700"'),
  maskX: s("M1.500 1v14M15.500 1v14", "#a4a6b4") + t(4, 13, "X", 13, "#999ba9", sans + ' font-weight="700"'),
  plusv: s("M1 8h6M4 5v6M11.500 1v14M8 8h7", "#999ba9", 2),
  plush: s("M0 11h5l2-5h8M3 8v6M10 3v6", "#999ba9", 2),
  lock: s("M1.500 2v13M15.500 2v13M5 8V5q3-4 6 0v3", G) + f("M4 8h8v6H4z", G),
  pointer: f("M4 1v12l3-3 2 5 2-1-2-5h4z", "#fff") + s("M4 1v12l3-3 2 5 2-1-2-5h4z"),
  zoomin: `<circle cx="7" cy="6" r="5" fill="none" stroke="#777a88"/>` + s("M4 6h6M7 3v6M1 11v3h8", "#777a88") + s("M10 9l5 5", "#777a88", 2),
  zoomout: `<circle cx="7" cy="6" r="5" fill="none" stroke="#777a88"/>` + s("M4 6h6M1 11v3h8", "#777a88") + s("M10 9l5 5", "#777a88", 2),
  cross: s("M8.500 2v13M2 8.500h13M6.500 6.500h4v4h-4z"),
  target: `<circle cx="7" cy="8" r="5.500" fill="none" stroke="#111"/>` + s("M7 0v5M7 11v5M0 8h4M10 8h5M6 8h2"),
  squeeze: s("M8.500 1v5M8.500 10v5", G) + f("M5 4h7l-3.500 4zM5 13h7l-3.500-4z", G),
  blob: `<ellipse cx="8" cy="11" rx="7" ry="4" fill="#9b9da9"/>` + s("M3 0v6M1 4l2 2 2-2", G),
  figure: s("M3 0v5M1 3l2 2 2-2M4 15l5-8 5-2M8 8l6 0M12 6l2 9M9 12h5M8 11v4", G),
  dots: f("M4 5h2v2H4zM8 3h2v2H8zM12 6h2v2h-2zM3 9h2v2H3zM7 12h2v2H7zM12 10h2v2h-2z", "#8f92a0"),
  textT: t(2, 14, "T", 18, "#000", serif),
  anno: box(1, 5, 10, 10, "none", G) + s("M6.500 5v10M1 10.500h11M13 1l2 4", G),
  arrow: s("M2 14L11 5", "#111", 2) + f("M6 2h8v8z"),
  lineT: s("M2 14L14 3", "#111", 1.5),
  rect: box(1, 4, 12, 9, "#a4a4a4"),
  hand: f("M4 15L1 8l2 0 2 2V2h2v6-7h2v7-6h2v6-4h2v7l-2 5z", "#fff") + s("M4.500 15L1.500 9l1-1L5 10V3M7.500 8V1M9.500 8V1M11.500 8V3M5 3l2-2M9 1l4 3v7l-2 4H5"),
  root: s("M1.500 1.500h9l3 3v10h-12zM10.500 1.500v3h3", "#9b9da9") + s("M3 9l2 4 2-7h6", "#858899") + t(7, 13, "α", 8, G),
  inset: page + s("M4.500 6v7h8") + s("M5 11l2-3 2 2 3-3", "#c01818"),
  handaxis: s("M4 10L2 6M5 8V2M7 8V1M9 8V1M11 9V3M4 10h7M0 13.500h16M13.500 0v16M4 12v4", G),
  cube: f("M5 4h8v10l-8 1z", "#a5a7b5") + s("M5 4l3-3h7v11l-3 3M12 4l3-3M5 4h7v11H5zM5 7L1 9l4 3", "#777"),
  stripes: f("M0 1h16v2H0zM0 5h16v2H0zM0 9h16v3H0zM0 13h16v3H0z", "#8c95a0"),
  rings: `<circle cx="8" cy="8" r="7" fill="none" stroke="#777a88"/><circle cx="8" cy="10" r="4.500" fill="none" stroke="#777a88"/><circle cx="8" cy="13" r="2" fill="none" stroke="#777a88"/>`,
  legend: s("M.5 16V.5h15V16M2 4.500h5M2 11.500h4M4 9v5", G) + t(8, 7, "B", 7, G, sans) + t(8, 14, "C", 7, G, sans),
  asterisk: s("M8 1v6M5 2l6 4M11 2L5 6M.5 16V10.500h15V16", "#777a88"),
  ruler: s("M3.500 .5h8v16h-8z", G) + s("M5 4.500h2M5 8.500h2M5 12.500h2M9.500 2v13", G),
  clock: `<circle cx="7" cy="7" r="6.500" fill="#fff" stroke="#111"/>` + s("M7 3v5M4 7h1") + f("M9 5h5v5h2v6H7v-3h3z", "#b81820") + s("M7 15.500h9"),
  stamp: f("M0 2h5l1 1h6v10H0z", "#9b9da9") + s("M9 7h4v5h2v3H7v-3h2z", "#666a78"),
  grid3: grid(1, 3, 3, 3, 4, 3, "#777a88"),
  steps: f("M10 0h6v3h-6zM5 3h6v3H5zM10 7h6v3h-6zM0 6h5v3H0zM5 10h6v3H5zM0 13h5v3H0z", "#6f7180"),
  axis1: s("M2.500 1v12.500h12M3 13L11 5M1 3l2-2 2 2M9 4h3v3", "#9b9da9"),
  axis2: s("M2.500 1v12.500h12M3 13L11 4", "#858899"),
  axis3: s("M2.500 1v12.500h12M3 13l11-8M1 3l2-2 2 2", "#858899"),
  swapxy: t(0, 11, "X", 9, "#444", sans) + t(9, 11, "Y", 9, "#444", sans) + s("M3 3q5-4 9 1M13 1v3h-3M13 13q-5 4-9-1M3 15v-3h3", "#777"),
  speed: s("M1.500 1v13.500h14", "#555") + s("M12 3L9 8l3 2-2 4M9 8l-2 3H4M5 6l2-2h4l2 2h2", "#445", 1.5) + f("M12 0h3v3h-3z", "#445"),
  lay1: s("M.5 .5h15v15H.5zM0 7.500h16M3 3v2h4M3 10v3h3M9 10v3h4", G),
  lay2: s("M.5 .5h15v5H.5zM.5 8.500h6v6h-6zM9.500 8.500h6v6h-6zM3 3h4M9 3h4M3 10v2h2M11 10v2h2", G),
  lay3: box(0, 0, 6, 6) + box(9, 0, 6, 6) + box(0, 9, 6, 6) + box(9, 9, 6, 6) + s("M3 2v2h2M11 2v2h2M3 11v2h2M11 11v2h2"),
  lay4: s("M.5 .5h15v4H.5zM.5 6.500h9v6h-9zM5.500 8.500h10v7h-10zM6 15l4-5 5 5", G),
  ax1: s("M2.500 1v12.500h12M3 3h2M3 7h2M6 12v1M10 12v1", "#777a88"),
  ax2: s("M2.500 14V2.500h12V14M3 6h2M6 3v2M10 3v2", "#999ba9"),
  ax3: s("M2.500 2v11.500h12V2M4 6h1M7 12v1M11 12v1M14 5h-2", "#858899"),
  ax4: s("M2.500 2.500h12v11h-12zM3 6h2M6 3v2M10 3v2M14 9h-2", "#777a88"),
  ax5: s("M2.500 1v12.500h4M9 2v5h6M3 5h2", "#858899"),
  ax6: s("M2.500 1v12.500h4M9 7V3h5M9 6h6", "#777a88"),
  alignl: s("M.5 0v16M4.500 1.500h6v5h-6zM4.500 9.500h9v5h-9z", G),
  alignr: s("M15.500 0v16M6.500 1.500h6v5h-6zM2.500 9.500h10v5h-10z", G),
  alignt: s("M0 .5h16M1.500 3.500h5v11h-5zM9.500 3.500h5v6h-5z", G),
  alignb: s("M0 15.500h16M1.500 1.500h5v11h-5zM9.500 6.500h5v6h-5z", G),
  midv: s("M8 0v16M4.500 2.500h7v4h-7zM2.500 9.500h11v5h-11z", "#777a88"),
  midh: s("M0 8h16M2.500 4.500h4v7h-4zM9.500 2.500h5v11h-5z", "#777a88"),
  samew: s("M3.500 1.500h8v5h-8zM5.500 10.500h8v5h-8zM1 0v8M14 0v8M3 9v7", G),
  sameh: s("M1.500 3.500h5v8h-5zM9.500 5.500h5v8h-5zM0 .5h8M8 15.500h8", G),
  dist1: s("M.5 4.500h4v7h-4zM6.500 1.500h3v13h-3zM12.500 6.500h3v3h-3z", G),
  dist2: s("M6.500 .5h3v3h-3zM2.500 6.500h11v3h-11zM4.500 12.500h7v3h-7z", G),
  front: box(0, 0, 8, 8, "#aaa", G) + box(7, 8, 7, 6, "#ccc", G) + box(3, 3, 8, 8, "#fff", "#777"),
  back: box(3, 3, 9, 9, "#fff", G) + box(0, 0, 6, 6, "#aaa", "#777") + box(9, 9, 6, 6, "#aaa", "#777"),
  fit1: box(4, 4, 8, 8, "none", "#777") + s("M.5 3v2M.5 11v2M15.500 3v2M15.500 11v2", G),
  fit2: box(4, 4, 8, 8, "none", "#777") + s("M6 6.500h2M9 8.500h2M6 10.500h2M.5 3v2M.5 11v2M15.500 3v2M15.500 11v2", G),
  group: box(2, 2, 8, 8, "#fff", "#777") + box(6, 6, 8, 8, "#fff", "#777") + f("M0 0h3v3H0zM13 0h3v3h-3zM0 13h3v3H0zM13 13h3v3h-3z", "#666a78"),
  ungroup: box(1, 1, 9, 8, "none", "#666") + box(5, 5, 9, 9, "none", "#666") + f("M0 0h3v3H0zM9 0h3v3H9zM0 8h3v3H0zM4 4h3v3H4zM13 4h3v3h-3zM4 13h3v3H4zM13 13h3v3h-3z", "#666a78"),
  pline: s("M2 15L14 1", "#333"),
  pscatter: f("M0 12h3v3H0zM4 7h3v3H4zM8 9h3v3H8zM10 1h3v3h-3z"),
  plinesym: s("M2 14l5-7 3 1 3-6") + f("M0 12h3v3H0zM5 6h3v3H5zM11 1h3v3h-3z"),
  pcolumn: f("M1 5h4v11H1zM6 0h4v16H6zM11 5h4v11h-4z", "#c81818") + s("M.5 5v11h15V5M5.500 4V16M10.500 4v12"),
  ptemplate: box(0, 0, 15, 15, "#fff") + s("M1 15L15 1M1 6l6 3 3-5 5 9M3 3l3 3", "#3038b0"),
  pbox: s("M8 0v4M8 12v4M4 .5h8M4 15.500h8M4 4.500h8v7H4zM4 8h8", "#c81828", 1.5),
  parea: f("M1 2l6 8 3-4 6 6v4H1z", "#d81818") + f("M6 9l4-5 3 6-3 3z", "#18c018") + f("M6 14l4-3 6 2v3H6z"),
  ppolar: `<ellipse cx="9.500" cy="8" rx="5.500" ry="7" fill="#fff" stroke="#111"/>` + s("M1.500 0v16M8 5v7M8 6h4"),
  pstock: s("M4 0v15M1.500 3.500h5v8h-5z") + s("M12 2v14", "#c81818") + f("M9 5h5v8H9z", "#e01818"),
  pzoom: f("M2 4l3-3h10v11l-3 3H2z", "#f0e020") + s("M1.500 4.500h10v10h-10zM1.500 4.500l3-3h11V12l-4 3M4 7h5M4 10h4v3M6 5v8"),
  bar3d: box(1, 5, 10, 10, "#fff") + s("M1 5l4-4h10v10l-4 4M11 5l4-4") + s("M5 14V8M9 13V5M12 11V4", "#3038a0", 2),
  surface: f("M1 6l4-4h10v9l-4 4H1z", "#58c8f0") + f("M4 3h11v3L4 11z", "#e8e020") + f("M8 1h6v3H8z", "#e03020") + f("M1 10h10v4H1z", "#2038c0") + s("M1 6l4-4h10v9l-4 4H1z"),
  scatter3d: box(1, 5, 10, 10, "#fff") + s("M1 5l4-4h10v10l-4 4M11 5l4-4") + f("M4 7h2v2H4zM8 9h2v2H8zM5 12h2v2H5zM8 3h2v2H8z"),
  contour: f("M0 0h16v16H0z", "#38e038") + f("M2 2h4v4H2zM10 2h4v4h-4zM6 6h4v4H6zM2 10h4v4H2zM10 10h4v4h-4z", "#f0e020") + f("M3 3h2v2H3zM11 3h2v2h-2zM3 11h2v2H3zM11 11h2v2h-2z", "#e02020"),
  profile: s("M0 6l4-5 4 5 4-5 4 5", "#d81818") + box(0, 8, 15, 7, "#38d838") + f("M3 10h4v4H3zM9 10h4v4H9z", "#f0e020") + s("M4 12h2M10 12h2", "#d81818", 2),
  image: box(0, 0, 15, 15, "#a9adb9", "#888b9a") + f("M6 3q5-2 6 6l-4 5z", "#9699aa"),
  maskr: f("M0 12h16v4H0z", "#d01818") + f("M3 1l2 2h6l2-2v8l-5 4-5-4z", "#fff") + s("M3.500 .5v9l4 4h1l4-4v-9l-3 2h-3zM5 6h2M9 6h2M6 9.500h4M8 9v3", "#111"),
  maskg: f("M0 12h16v4H0z", "#888") + s("M2.500 1v7l3 4h4l4-4V1l-3 2h-5zM3 3l9 8M12 3l-9 8", "#777"),
  maskd: s("M2.500 1v9l5 5 5-5V1l-3 2h-4zM5 6h2M9 6h2M6 10h4", "#666a78") + f("M8 4l5-3v10l-5 4z", "#9b9da9"),
  grp1: f("M0 4h3v3H0zM5 4h3v3H5zM0 10h3v3H0zM5 10h3v3H5z", "#8a8c99") + s("M12.500 1v14M9 5h3M10 3l2.500-2.500L15 3M10 13l2.500 2.500L15 13", "#666a78"),
  grp2: f("M0 4h3v3H0zM0 10h3v3H0zM5 10h3v3H5z") + f("M5 4h4v3H5z", "#d01818") + s("M13.500 1v14M11 3l2.500-2.500L16 3M11 13l2.500 2.500L16 13"),
  rotl: f("M7 0h4v16H7z", "#a5a7b5") + s("M7.500 0v16M10.500 0v16", G) + s("M2 5q0 6 6 6t7-7M12 5l3-2 1 3", G, 2),
  rotr: f("M6 0h4v16H6z", "#a5a7b5") + s("M6.500 0v16M9.500 0v16", G) + s("M14 5q0 6-6 6T1 4M4 5L1 3 0 6", G, 2),
  tiltl: f("M0 1h4l3 14H4z", "#b5b7c4") + s("M1 1h3l3 14H4zM9 5h6M11 3v4", G, 2),
  tiltr: f("M12 1h4l-3 14h-3z", "#b5b7c4") + s("M12 1h3l-3 14H9zM1 5h7M6 3l2 2-2 2", G, 2),
  trap: f("M6 2h4l5 12H1z", "#a5a7b5") + s("M6 2h4l5 12H1zM3 10h10", "#777a88"),
  trapd: f("M1 2h14l-5 13H6z", "#a5a7b5") + s("M1 2h14l-5 12H6zM3 5h10", "#777a88"),
  lamp: f("M1 9h14v6H1z", "#b5b7c4") + s("M1 8.500h14v6H1zM5 8V5h6v3M6 5l1-5h2l1 5", "#777a88"),
  cubes: box(6, 0, 9, 9, "#a5a7b5", "#777a88") + box(1, 7, 8, 8, "#c5c7d3", "#777a88"),
  expand: s("M1 1l14 14M15 1L1 15M1 5V1h4M11 1h4v4M15 11v4h-4M5 15H1v-4", G, 1.5) + box(5, 5, 5, 5, "#bbb", "#666"),
  cube2: box(3, 5, 7, 7, "#a5a7b5", "#666") + s("M3 5l3-3h8v7l-3 3M7 0v5M0 15l4-4", "#777"),
  cube3: box(4, 6, 6, 6, "#ddd", "#666") + s("M4 6l3-3h6v6l-3 3M1 5l5-4h9v9l-5 5H1z", G)
};

// larger coloured pictures
const big = {
  origin: `<svg viewBox="0 0 32 32"><rect x="12" y="1" width="19" height="20" fill="#e7f0fa" stroke="#5f87b8"/><path d="M12 8h19M12 14h19M18 1v20M25 1v20" stroke="#8db0d8"/><circle cx="15" cy="17" r="14" fill="#ea8d7a" stroke="#c8503e"/><path d="M6 11h18M6 19h18M11 5v24M19 5v24" stroke="#f6c1b2"/><path d="M7 24l5-9 3 5 5-11 2 5" fill="none" stroke="#7c2f2c" stroke-width="1.500"/></svg>`,
  "origin-round": `<svg viewBox="0 0 40 40"><circle cx="20" cy="20" r="19" fill="#e3684d" stroke="#bd3d24"/><ellipse cx="20" cy="11" rx="15" ry="9" fill="#f2a48f"/><path d="M11 10h24M11 20h24M11 29h24M14 7v24M23 7v24M32 7v24" stroke="#f8c9bb" fill="none"/><path d="M13 30l6-6 5-13 5 5 4-9" fill="none" stroke="#4c5562"/><path d="M11 29h3v3h-3zM18 22h3v3h-3zM22 10h3v3h-3zM31 6h3v3h-3z" fill="#3b4654"/></svg>`,
  book: `<svg viewBox="0 0 20 20"><path d="M1 1h18v18H1z" fill="#86e6a8"/><path d="M1 1h18v5H1z" fill="#f7b8c4"/><path d="M1 1h18M1 6.500h18M1 10.500h18M1 14.500h18M7 2v17M13 2v17" stroke="#7a2460" fill="none"/><path d="M3 2h2v3H3zM9 2h2v3H9zM15 2h2v3h-2z" fill="#e03050"/><path d="M.5.5v18h18V.5z" fill="none" stroke="#7a2460"/><path d="M1 19.500h18.500V1" fill="none" stroke="#111"/></svg>`,
  graphfile: `<svg viewBox="0 0 20 20"><path d="M1 1h17v17H1z" fill="#d9c8cd" stroke="#7a1d3a" stroke-width="1.500"/><path d="M4 3h12v12H4z" fill="#35d3d3"/><path d="M5 9l4-4 6-1M5 13l4-3 3 1 3-3" fill="none" stroke="#175a60" stroke-width="1.500"/><path d="M5 16.500h2M9 16.500h2M13 16.500h2" stroke="#e22"/><path d="M1 19.500h18.500V1" fill="none" stroke="#111"/></svg>`,
  addapp: `<svg viewBox="0 0 40 40"><rect x="1" y="1" width="34" height="34" fill="#fff" stroke="#3c95cd" stroke-width="1.500"/><path d="M0 0h36v5H0z" fill="#2483c4"/><path d="M4 8h11v15H4z" fill="#cfd2d6"/><path d="M18 12h13v12H18zM25 8h7v2h-7zM8 26h7v2H8zM4 30h12v2H4z" fill="#fff" stroke="#c9ccd0"/><circle cx="28" cy="29" r="12" fill="#e5323c"/><path d="M28 22v14M21 29h14" stroke="#fff" stroke-width="4"/></svg>`,
  maker: `<svg viewBox="0 0 40 40"><path d="M4 2v22" stroke="#a02038" stroke-width="4" stroke-dasharray="2 2"/><path d="M10 2v22" stroke="#30a030" stroke-width="4" stroke-dasharray="2 2"/><path d="M16 2v22" stroke="#2020a0" stroke-width="4" stroke-dasharray="2 2"/><path d="M20 31h5v8h-5z" fill="#901818"/><path d="M28 28h5v11h-5z" fill="#188018"/><path d="M35 22h5v17h-5z" fill="#000090"/><path d="M2 34l17-12c-2-5 2-12 10-11l-5 6 3 5 7-1c0 6-6 9-12 6L5 39z" fill="#8c8410"/></svg>`,
  ppt: `<svg viewBox="0 0 40 40"><g fill="none" stroke="#dc6c55" stroke-width="1.500"><path d="M15 4l15-4v33l-15-3zM30 6h10v22H30"/></g><path d="M31 12a4 4 0 1 0 5 0zM30 20h7v2h-7zM30 24h7v2h-7z" fill="#cf432a"/><path d="M0 30h9v-3l7 6-7 6v-3H0z" fill="#dd5535"/><text x="18" y="22" font-size="14" fill="#dc6c55" font-family="Liberation Sans">P</text></svg>`,
  wordsend: `<svg viewBox="0 0 40 40"><path d="M11 8l15-3v27l-15-3zM26 8h12v21H26M28 13h6M28 18h6M28 23h6" fill="none" stroke="#202878" stroke-width="1.500"/><path d="M3 28h8v-4l6 6-6 6v-4H3z" fill="#0808e8"/><text x="13" y="22" font-size="12" fill="#202878" font-weight="700" font-family="Liberation Sans">W</text></svg>`,
  seqfit: `<svg viewBox="0 0 40 40"><g fill="none" stroke="#a45ab5" stroke-width="2.500"><path d="M1 24c9 2 7-23 12-23s4 20 9 25"/><path d="M8 31c9 1 7-23 12-23s4 20 9 24"/><path d="M15 37c9 1 6-22 11-22s5 20 13 22"/></g></svg>`,
  simplefit: `<svg viewBox="0 0 40 40"><path d="M0 0h40v40H0z" fill="#9dc3e8"/><path d="M3 4v34h34" fill="none" stroke="#fff" stroke-width="2"/><path d="M0 8l3-6 3 6M31 36l6 2-6 2" fill="#fff"/><path d="M9 34q14 2 20-11 4-7 6-18" fill="none" stroke="#e4b8dc" stroke-width="4"/><path d="M9 34h.1M17 33h.1M24 30h.1M28 23h.1M34 16h.1M36 5h.1" stroke="#fff" stroke-width="4" stroke-linecap="round"/></svg>`,
  wand: `<svg viewBox="0 0 40 40"><path d="M20 18l20 20" stroke="#444b57" stroke-width="2.500"/><path d="M17 1l2 9 8 4-8 4-1 9-7-6-8 3 4-8-5-7 9 1z" fill="#e5b630" stroke="#c89b25"/><path d="M28 2v5M25 4h6M4 26v5M1 29h6" stroke="#e7cd78" stroke-width="1.500"/></svg>`,
  windows: `<svg viewBox="0 0 32 32"><path d="M1 2h14v14H1z" fill="#31b5ed"/><path d="M16 2h14v14H16z" fill="#1da1e4"/><path d="M1 17h14v14H1z" fill="#1799df"/><path d="M16 17h14v14H16z" fill="#087fd3"/></svg>`,
  search: `<svg viewBox="0 0 32 32"><circle cx="18" cy="13" r="10" fill="#e6f0f4" stroke="#222" stroke-width="2.500"/><path d="M11 20L4 29" stroke="#222" stroke-width="3.500" stroke-linecap="round"/></svg>`,
  taskview: `<svg viewBox="0 0 32 32"><rect x="1" y="9" width="22" height="21" rx="1" fill="#282828"/><rect x="8" y="2" width="22" height="20" rx="1" fill="#f5f5f5" opacity=".82"/></svg>`,
  widgets: `<svg viewBox="0 0 32 32"><rect x="1" y="2" width="30" height="28" rx="2" fill="#135ca3"/><path d="M4 5h10v22H4z" fill="#fff"/><path d="M16 5h12v14H16z" fill="#65d2fb"/><path d="M16 20h12v7H16z" fill="#168bd6"/></svg>`,
  edge: `<svg viewBox="0 0 32 32"><circle cx="16" cy="16" r="15" fill="#1482d2"/><path d="M1 15C2-4 31-3 31 13c0 5-4 8-9 8-6 0-2-2-2-5 0-8-14-8-19-1z" fill="#36c6c0"/><path d="M15 2c12-2 17 7 16 12-1 5-5 7-10 7-4 0-2-2-1-4z" fill="#58cf78"/><path d="M12 16c-4 9 8 15 17 9-7 10-23 8-20-5 1-3 3-4 3-4z" fill="#0b4d95"/><path d="M12 16c0 9 10 11 17 8-9 5-20 1-17-8z" fill="#dcebf3"/></svg>`,
  files: `<svg viewBox="0 0 32 32"><path d="M1 3h10l3 4H1z" fill="#d79320"/><path d="M1 6h30v23H1z" fill="#fdcf4e"/><path d="M7 29v-5q0-3 3-3h13q3 0 3 3v5z" fill="#1576bf"/><path d="M11 25h11v1H11z" fill="#9cd3f5"/></svg>`,
  store: `<svg viewBox="0 0 32 32"><path d="M9 7V2h14v5" fill="none" stroke="#48b2e5" stroke-width="2"/><rect x="1" y="6" width="30" height="25" rx="3" fill="#18477f"/><path d="M10 12h6v6h-6z" fill="#f25022"/><path d="M17 12h6v6h-6z" fill="#7fba00"/><path d="M10 19h6v6h-6z" fill="#27b3ef"/><path d="M17 19h6v6h-6z" fill="#ffb900"/></svg>`,
  mail: `<svg viewBox="0 0 32 32"><path d="M1 12L16 1l15 11z" fill="#0b4a91"/><path d="M1 12h30v18H1z" fill="#1990dc"/><path d="M3 12h26L16 24z" fill="#f3fbff"/><path d="M1 12l15 11L1 30z" fill="#4cc2f3"/></svg>`,
  calc: `<svg viewBox="0 0 32 32"><rect x="5" y="1" width="22" height="30" rx="2" fill="#646d73"/><path d="M8 4h16v6H8z" fill="#45c3df"/><path d="M8 13h4v4H8zM14 13h4v4h-4zM20 13h4v4h-4zM8 19h4v4H8zM14 19h4v4h-4zM8 25h4v4H8zM14 25h4v4h-4z" fill="#e2e2e2"/><path d="M20 19h4v10h-4z" fill="#15518b"/></svg>`,
  word: `<svg viewBox="0 0 32 32"><rect x="8" y="2" width="23" height="28" rx="2" fill="#2b78d0"/><path d="M8 10h23v7H8z" fill="#1d62ba"/><path d="M8 17h23v11q0 2-2 2H10q-2 0-2-2z" fill="#174894"/><rect x="1" y="8" width="17" height="17" rx="2" fill="#185abd"/><text x="3" y="21" font-size="13" fill="#fff" font-weight="700" font-family="Liberation Sans">W</text></svg>`,
  firefox: `<svg viewBox="0 0 32 32"><path d="M3 8l3 3 1-6 5 4q4-1 6-8c3 3 3 5 3 7l3-2c10 9 8 25-8 25C2 31-3 18 3 8z" fill="#fb722b"/><path d="M18 1c0 7 8 8 7 18-2 7-10 9-17 5 10 14 27 1 22-13q-2-4-5-5z" fill="#ffc52b"/><circle cx="16" cy="18" r="7.500" fill="#8540c7"/><path d="M8 12q7-4 11 2-6 0-5 5c-6 0-7-4-6-7z" fill="#ff5a35"/></svg>`
};

const svg = name => `<svg viewBox="0 0 16 16" aria-hidden="true">${icons[name]}</svg>`;

// "*" pressed, "+" drop-down, "^" drop-down with a wider arrow part
document.querySelectorAll("[data-tools]").forEach(el => {
  el.dataset.tools.split(" ").forEach(tok => {
    if (tok === "|") {
      el.insertAdjacentHTML("beforeend", '<span class="sep"></span>');
      return;
    }
    let cls = "tool";
    if (tok.startsWith("*")) cls += " on";
    if (tok.endsWith("+")) cls += " dd";
    if (tok.endsWith("^")) cls += " dd wide";
    const name = tok.replace(/[*+^]/g, "");
    el.insertAdjacentHTML("beforeend", `<button class="${cls}" aria-label="${name}">${svg(name)}</button>`);
  });
});

document.querySelectorAll(".toolbar").forEach(bar => {
  bar.insertAdjacentHTML("beforeend", '<button class="more" aria-label="Toolbar options"><svg viewBox="0 0 6 7"><path d="M0 0h6v1H0zM0 3h6L3 7z"/></svg></button>');
});

document.querySelectorAll("[data-icon]").forEach(el => { el.innerHTML = svg(el.dataset.icon); });
document.querySelectorAll("[data-big]").forEach(el => { el.innerHTML = big[el.dataset.big]; });

document.querySelectorAll(".panel-btns").forEach(el => {
  el.innerHTML = `
    <button aria-label="Options"><svg viewBox="0 0 11 11"><path d="M1 3h9L5.500 8z"/></svg></button>
    <button aria-label="Pin"><svg viewBox="0 0 11 11"><path d="M3.500 1.500h4v5h-4zM1 6.500h9M5.500 7v4M7 2v4" fill="none" stroke="#111"/></svg></button>
    <button aria-label="Close panel"><svg viewBox="0 0 11 11"><path d="M1.500 1.500l8 8M9.500 1.500l-8 8" stroke="#111" stroke-width="1.500"/></svg></button>`;
});

// worksheet rows
const values = ["2", "5.6", "1.2", "3.6", "0.6", "4.2", "6.2", "6.2", "4.1"];
let rows = "";
["长名称", "单位", "注释", "F(x)="].forEach((name, i) => {
  rows += `<tr class="label${i === 3 ? " fx" : ""}"><th>${name}</th>${"<td></td>".repeat(6)}</tr>`;
});
for (let r = 1; r <= 36; r++) {
  const v = values[r - 1];
  const first = v ? `<td class="data">${r}</td><td class="data">${v}</td>` : "<td></td><td></td>";
  rows += `<tr><th>${r}</th>${first}${"<td></td>".repeat(4)}</tr>`;
}
document.getElementById("sheetBody").innerHTML = rows;
```
